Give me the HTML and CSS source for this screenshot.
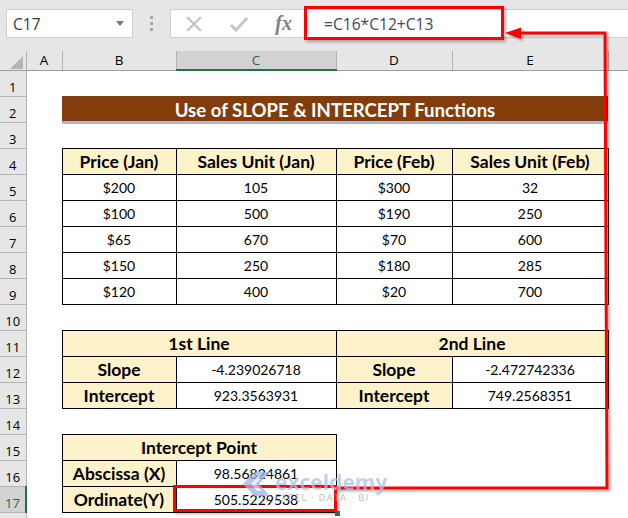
FILE: index.html
```html
<!DOCTYPE html>
<html lang="en">
<head>
    <meta charset="UTF-8">
    <meta name="viewport" content="width=device-width, initial-scale=1.0">
    <title>Use of SLOPE &amp; INTERCEPT Functions</title>
    <link rel="stylesheet" href="styles.css">
</head>
<body>
    <div class="window">
        <div class="formula-bar">
            <div class="name-box">
                <span>C17</span>
                <span class="caret"></span>
            </div>
            <div class="grip"><i></i><i></i><i></i></div>
            <div class="formula-box">
                <div class="formula-icons">
                    <svg width="18" height="16" viewBox="0 0 18 16"><path d="M2 1 L16 15 M16 1 L2 15" stroke="#c6c6c6" stroke-width="2.4" fill="none"/></svg>
                    <svg width="18" height="16" viewBox="0 0 18 16"><path d="M1 9 L6 14 L17 2" stroke="#c6c6c6" stroke-width="3" fill="none"/></svg>
                    <span class="fx">fx</span>
                </div>
                <div class="formula-text">=C16*C12+C13</div>
            </div>
        </div>

        <table class="sheet">
            <colgroup>
                <col class="col-head"><col class="col-a"><col class="col-b"><col class="col-c"><col class="col-d"><col class="col-e"><col>
            </colgroup>
            <thead>
                <tr>
                    <th class="corner"><span class="corner-mark"></span></th>
                    <th>A</th><th>B</th><th class="picked-col">C</th><th>D</th><th>E</th><th class="last-col"></th>
                </tr>
            </thead>
            <tbody>
                <tr><th>1</th><td colspan="6"></td></tr>
                <tr><th>2</th><td></td><td colspan="4" class="title">Use of SLOPE &amp; INTERCEPT Functions</td><td></td></tr>
                <tr><th>3</th><td colspan="6"></td></tr>
                <tr><th>4</th><td></td><td class="cell label">Price (Jan)</td><td class="cell label">Sales Unit (Jan)</td><td class="cell label">Price (Feb)</td><td class="cell label">Sales Unit (Feb)</td><td></td></tr>
                <tr><th>5</th><td></td><td class="cell">$200</td><td class="cell">105</td><td class="cell">$300</td><td class="cell">32</td><td></td></tr>
                <tr><th>6</th><td></td><td class="cell">$100</td><td class="cell">500</td><td class="cell">$190</td><td class="cell">250</td><td></td></tr>
                <tr><th>7</th><td></td><td class="cell">$65</td><td class="cell">670</td><td class="cell">$70</td><td class="cell">600</td><td></td></tr>
                <tr><th>8</th><td></td><td class="cell">$150</td><td class="cell">250</td><td class="cell">$180</td><td class="cell">285</td><td></td></tr>
                <tr><th>9</th><td></td><td class="cell">$120</td><td class="cell">400</td><td class="cell">$20</td><td class="cell">700</td><td></td></tr>
                <tr><th>10</th><td colspan="6"></td></tr>
                <tr><th>11</th><td></td><td colspan="2" class="cell label">1st Line</td><td colspan="2" class="cell label">2nd Line</td><td></td></tr>
                <tr><th>12</th><td></td><td class="cell label">Slope</td><td class="cell">-4.239026718</td><td class="cell label">Slope</td><td class="cell">-2.472742336</td><td></td></tr>
                <tr><th>13</th><td></td><td class="cell label">Intercept</td><td class="cell">923.3563931</td><td class="cell label">Intercept</td><td class="cell">749.2568351</td><td></td></tr>
                <tr><th>14</th><td colspan="6"></td></tr>
                <tr><th>15</th><td></td><td colspan="2" class="cell label">Intercept Point</td><td colspan="3"></td></tr>
                <tr><th>16</th><td></td><td class="cell label">Abscissa (X)</td><td class="cell">98.56824861</td><td colspan="3"></td></tr>
                <tr><th class="picked-row">17</th><td></td><td class="cell label">Ordinate(Y)</td><td class="cell">505.5229538</td><td colspan="3"></td></tr>
                <tr><th></th><td colspan="6"></td></tr>
            </tbody>
        </table>

        <!-- red callouts drawn on top of the sheet -->
        <div class="callout callout-formula"></div>
        <div class="callout callout-cell"></div>
        <span class="fill-handle"></span>
        <svg class="arrow" width="628" height="518" viewBox="0 0 628 518">
            <path d="M337 488 H607 L605 33 H518" stroke="#fe0000" stroke-width="3" fill="none"/>
            <path d="M505 33 L521 27.5 L521 39 Z" fill="#fe0000"/>
        </svg>

        <div class="watermark">
            <svg width="27" height="24" viewBox="0 0 27 24"><path d="M0 12 L11 0 H27 L16 12 L27 24 H11 Z" fill="#9db4e4"/><path d="M8 12 L14 5 H19 L13 12 L19 19 H14 Z" fill="#dfe7f7"/></svg>
            <div>
                <div class="wm-name">exceldemy</div>
                <div class="wm-tag">EXCEL · DATA · BI</div>
            </div>
        </div>
    </div>
</body>
</html>
```

FILE: styles.css
```css
* {
    box-sizing: border-box;
}

body {
    margin: 0;
    background: #ffffff;
}

.window {
    position: relative;
    width: 628px;
    height: 518px;
    overflow: hidden;
    background: #e6e6e6;
    font-family: 'Lato', 'Liberation Sans', sans-serif;
}

/* formula bar */
.formula-bar {
    display: flex;
    height: 51px;
    padding: 9px 0 13px 6px;
    align-items: stretch;
}

.name-box {
    width: 127px;
    display: flex;
    align-items: center;
    justify-content: space-between;
    padding: 0 8px 0 6px;
    background: #ffffff;
    border: 1px solid #d0d0d0;
    font-family: 'Open Sans', sans-serif;
    font-size: 15.5px;
    color: #3a3a3a;
}

.caret {
    border-left: 4px solid transparent;
    border-right: 4px solid transparent;
    border-top: 5px solid #777777;
}

.grip {
    width: 37px;
    display: flex;
    flex-direction: column;
    align-items: center;
    justify-content: center;
    gap: 3px;
}

.grip i {
    width: 3px;
    height: 3px;
    background: #a8a8a8;
}

.formula-box {
    flex: 1;
    display: flex;
    align-items: center;
    background: #ffffff;
    border: 1px solid #d0d0d0;
    border-right: none;
}

.formula-icons {
    width: 135px;
    padding: 0 14px;
    display: flex;
    align-items: center;
    justify-content: space-between;
}

.fx {
    font-family: 'Liberation Serif', serif;
    font-style: italic;
    font-weight: bold;
    font-size: 20px;
    color: #808080;
}

.formula-text {
    padding-left: 18px;
    font-family: 'Open Sans', sans-serif;
    font-size: 15.6px;
    color: #3c4a5c;
}

/* sheet */
.sheet {
    width: 628px;
    table-layout: fixed;
    border-collapse: collapse;
    background: #ffffff;
    font-size: 14px;
    color: #000000;
}

.col-head { width: 26px; }
.col-a { width: 36px; }
.col-b { width: 114px; }
.col-c { width: 160px; }
.col-d { width: 116px; }
.col-e { width: 156px; }

.sheet td,
.sheet th {
    padding: 0;
    height: 26px;
    text-align: center;
}

.sheet tbody th {
    vertical-align: bottom;
    line-height: 18px;
}

.sheet th {
    background: #e6e6e6;
    border-right: 1px solid #b4b4b4;
    border-bottom: 1px solid #b4b4b4;
    font-family: 'Open Sans', sans-serif;
    font-weight: normal;
    font-size: 13px;
}

.sheet thead th {
    height: 19px;
    font-size: 13.5px;
    border-bottom: 1px solid #9e9e9e;
}

.corner {
    position: relative;
}

.corner-mark {
    position: absolute;
    right: 3px;
    bottom: 1px;
    border-left: 13px solid transparent;
    border-bottom: 13px solid #b5b5b5;
}

.sheet .last-col {
    border-right: none;
}

.sheet .picked-col {
    background: #d2d2d2;
    color: #1e6b41;
    border-bottom: 2px solid #217346;
}

.sheet .picked-row {
    background: #d2d2d2;
    color: #1e6b41;
    border-right: 2px solid #217346;
}

.sheet .title {
    padding-top: 3px;
    background: #833c0b;
    border-bottom: 3px solid #a9b9dd;
    color: #ffffff;
    font-weight: bold;
    font-size: 18.6px;
}

.cell {
    border: 1px solid #000000;
}

.label {
    background: #fef2cb;
    font-weight: bold;
    font-size: 17.5px;
}

/* callouts */
.callout {
    position: absolute;
    border: 3px solid #fe0000;
    box-shadow: 2px 2px 3px rgba(0, 0, 0, 0.3);
}

.callout-formula {
    left: 304px;
    top: 6px;
    width: 200px;
    height: 34px;
}

.callout-cell {
    left: 173px;
    top: 485px;
    width: 164px;
    height: 27px;
}

.fill-handle {
    position: absolute;
    left: 335px;
    top: 511px;
    width: 5px;
    height: 5px;
    background: #217346;
}

.arrow {
    position: absolute;
    left: 0;
    top: 0;
    filter: drop-shadow(2px 2px 1px rgba(0, 0, 0, 0.3));
}

.watermark {
    position: absolute;
    left: 243px;
    top: 472px;
    display: flex;
    gap: 5px;
    opacity: 0.75;
}

.wm-name {
    font-family: 'Open Sans', sans-serif;
    font-weight: bold;
    font-size: 21px;
    line-height: 21px;
    color: #aebfe8;
}

.wm-tag {
    font-family: 'Open Sans', sans-serif;
    font-size: 9px;
    line-height: 10px;
    letter-spacing: 1.4px;
    color: #a0a0a0;
}
```
